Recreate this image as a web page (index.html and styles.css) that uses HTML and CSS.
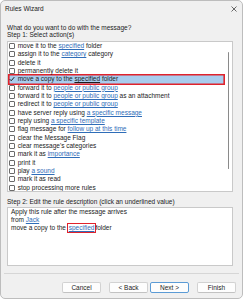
FILE: index.html
```html
<!DOCTYPE html>
<html>
<head>
<meta charset="utf-8">
<link rel="stylesheet" href="styles.css">
</head>
<body>
<div class="window">
  <div class="titlebar">
    <span class="title">Rules Wizard</span>
    <svg class="close" width="6" height="6" viewBox="0 0 6 6"><path d="M0.5 0.5 L5.5 5.5 M5.5 0.5 L0.5 5.5" stroke="#3a3a3a" stroke-width="0.75" fill="none"/></svg>
  </div>
  <div class="content">
    <div class="line q">What do you want to do with the message?</div>
    <div class="line">Step 1: Select action(s)</div>
    <div class="listbox">
      <div class="list">
        <div class="row"><span class="cb"></span><span>move it to the <span class="link">specified</span> folder</span></div>
        <div class="row"><span class="cb"></span><span>assign it to the <span class="link">category</span> category</span></div>
        <div class="row"><span class="cb"></span><span>delete it</span></div>
        <div class="row"><span class="cb"></span><span>permanently delete it</span></div>
        <div class="row selected"><span class="cb checked"><svg width="7" height="6" viewBox="0 0 7 6"><path d="M0.8 3.2 L2.6 5 L6.2 0.8" stroke="#111111" stroke-width="1.1" fill="none"/></svg></span><span>move a copy to the <span class="ul">specified</span> folder</span></div>
        <div class="row"><span class="cb"></span><span>forward it to <span class="link">people or public group</span></span></div>
        <div class="row"><span class="cb"></span><span>forward it to <span class="link">people or public group</span> as an attachment</span></div>
        <div class="row"><span class="cb"></span><span>redirect it to <span class="link">people or public group</span></span></div>
        <div class="row"><span class="cb"></span><span>have server reply using <span class="link">a specific message</span></span></div>
        <div class="row"><span class="cb"></span><span>reply using <span class="link">a specific template</span></span></div>
        <div class="row"><span class="cb"></span><span>flag message for <span class="link">follow up at this time</span></span></div>
        <div class="row"><span class="cb"></span><span>clear the Message Flag</span></div>
        <div class="row"><span class="cb"></span><span>clear message's categories</span></div>
        <div class="row"><span class="cb"></span><span>mark it as <span class="link">importance</span></span></div>
        <div class="row"><span class="cb"></span><span>print it</span></div>
        <div class="row"><span class="cb"></span><span>play <span class="link">a sound</span></span></div>
        <div class="row"><span class="cb"></span><span>mark it as read</span></div>
        <div class="row"><span class="cb"></span><span>stop processing more rules</span></div>
      </div>
      <div class="thumb"></div>
    </div>
    <div class="line step2">Step 2: Edit the rule description (click an underlined value)</div>
    <div class="desc">
      <div class="dline">Apply this rule after the message arrives</div>
      <div class="dline">from <span class="link">Jack</span></div>
      <div class="dline">move a copy to the <span class="link boxed">specified</span>folder</div>
    </div>
  </div>
  <div class="sep"></div>
  <div class="buttons">
    <button class="btn cancel">Cancel</button>
    <button class="btn back">&lt; Back</button>
    <button class="btn next">Next &gt;</button>
    <button class="btn finish">Finish</button>
  </div>
</div>
</body>
</html>
```

FILE: styles.css
```css
html, body {
  margin: 0;
  padding: 0;
  background: #ffffff;
}
body {
  font-family: "Liberation Sans", Arial, sans-serif;
  font-size: 6.5px;
  color: #1b1b1b;
}
.window {
  width: 243px;
  height: 299px;
  box-sizing: border-box;
  border: 1px solid #bdbdbd;
  border-radius: 5px;
  background: #f0f0f0;
  display: flex;
  flex-direction: column;
  overflow: hidden;
}
.titlebar {
  height: 16px;
  flex: none;
  display: flex;
  align-items: center;
  justify-content: space-between;
  padding: 0 5px 0 4px;
}
.title {
  line-height: 16px;
}
.close {
  display: block;
}
.content {
  padding: 6.6px 9px 0 6px;
}
.line {
  line-height: 7.4px;
  height: 7.4px;
  white-space: nowrap;
}
.listbox {
  position: relative;
  margin-top: 2.6px;
  border: 1px solid #c9c9c9;
  background: #ffffff;
  height: 149px;
  overflow: hidden;
}
.list {
  padding: 1px 8px 0 1px;
}
.row {
  height: 8.333px;
  line-height: 8.333px;
  display: flex;
  align-items: center;
  white-space: nowrap;
  box-sizing: border-box;
}
.row:first-child {
  margin-top: -1px;
}
.cb {
  flex: none;
  width: 6px;
  height: 6px;
  box-sizing: border-box;
  border: 1px solid #6b6b6b;
  border-radius: 1px;
  background: #ffffff;
  margin-left: 0;
  margin-right: 2.7px;
  display: flex;
  align-items: center;
  justify-content: center;
}
.cb.checked {
  border: none;
  background: transparent;
}
.cb.checked svg {
  display: block;
}
.selected {
  background: #a9cdee;
  box-shadow: 0 0 0 1px #e0232c, inset 0 0 0 0.6px #e0232c;
}
.link {
  color: #2f6db8;
  text-decoration: underline;
}
.ul {
  text-decoration: underline;
}
.thumb {
  position: absolute;
  left: 220px;
  top: 10px;
  width: 1px;
  height: 117px;
  border-radius: 1px;
  background: #8a8a8a;
}
.step2 {
  margin-top: 6px;
}
.desc {
  margin-top: 1.6px;
  border: 1px solid #c9c9c9;
  background: #ffffff;
  height: 57px;
  padding-left: 3px;
}
.dline {
  height: 8px;
  line-height: 8px;
  white-space: nowrap;
}
.boxed {
  display: inline-block;
  height: 8px;
  line-height: 8px;
  padding: 0 1px;
  box-shadow: 0 0 0 1px #e0232c;
}
.sep {
  margin: 7px 3px 0 3px;
  height: 0;
  border-top: 1px solid #d6d6d6;
}
.buttons {
  margin-top: 8.5px;
  display: flex;
  justify-content: flex-end;
  padding-right: 6px;
}
.btn {
  width: 39px;
  height: 11px;
  box-sizing: border-box;
  padding: 0;
  margin: 0;
  font-family: "Liberation Sans", Arial, sans-serif;
  font-size: 6.5px;
  color: #1b1b1b;
  background: #fdfdfd;
  border: 1px solid #d2d2d2;
  border-bottom-color: #c2c2c2;
  border-radius: 2px;
  line-height: 9px;
}
.back {
  margin-left: 8px;
}
.next {
  margin-left: 2px;
  border-color: #5b9bd5;
}
.finish {
  margin-left: 8px;
}
```
